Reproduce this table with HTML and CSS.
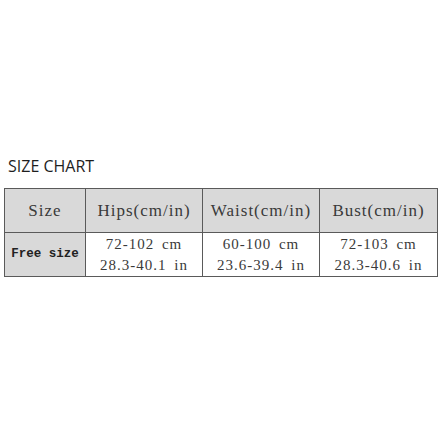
FILE: index.html
```html
<!DOCTYPE html>
<html>
<head>
<meta charset="utf-8">
<link rel="stylesheet" href="styles.css">
</head>
<body>
<div class="page">
  <h2 class="title">SIZE CHART</h2>
  <table class="chart">
    <colgroup>
      <col class="c1"><col class="c2"><col class="c3"><col class="c4">
    </colgroup>
    <tr class="head">
      <th>Size</th>
      <th>Hips(cm/in)</th>
      <th>Waist(cm/in)</th>
      <th>Bust(cm/in)</th>
    </tr>
    <tr class="data">
      <td class="label">Free size</td>
      <td>72-102 cm<br>28.3-40.1 in</td>
      <td>60-100 cm<br>23.6-39.4 in</td>
      <td>72-103 cm<br>28.3-40.6 in</td>
    </tr>
  </table>
</div>
</body>
</html>
```
FILE: styles.css
```css
html, body {
  margin: 0;
  padding: 0;
  background: #ffffff;
}
.page {
  width: 441px;
  height: 441px;
  padding: 155px 4px 0 4px;
  box-sizing: border-box;
}
.title {
  margin: 0 0 11px 4px;
  font-family: "Open Sans", sans-serif;
  font-weight: 400;
  font-size: 16px;
  line-height: 22px;
  color: #1e1e1e;
}
.chart {
  border-collapse: collapse;
  width: 433px;
  table-layout: fixed;
  font-family: "Liberation Serif", serif;
  color: #3a3a3a;
}
.c1 { width: 81px; }
.c2 { width: 117px; }
.c3 { width: 117px; }
.c4 { width: 118px; }
.chart th, .chart td {
  border: 1px solid #5a5a5a;
  text-align: center;
  padding: 0;
}
.head th {
  height: 43px;
  background: #d9d9d9;
  font-weight: 400;
  font-size: 17px;
  letter-spacing: 1px;
}
.data td {
  height: 43px;
  font-size: 15px;
  line-height: 21px;
  letter-spacing: 1px;
  word-spacing: 3px;
}
.data td.label {
  background: #d9d9d9;
  font-family: "Liberation Mono", monospace;
  font-weight: 700;
  font-size: 12.5px;
  letter-spacing: 0;
  word-spacing: 0;
  color: #222;
}
```
